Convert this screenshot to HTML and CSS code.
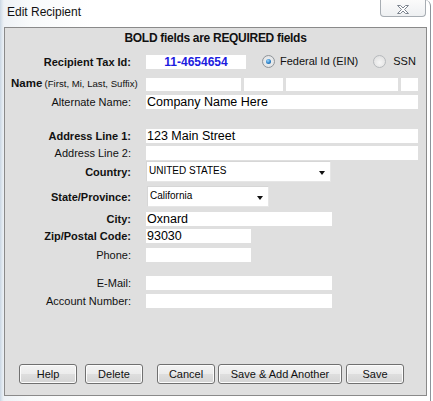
FILE: index.html
```html
<!DOCTYPE html>
<html>
<head>
<meta charset="utf-8">
<title>Edit Recipient</title>
<link rel="stylesheet" href="styles.css">
</head>
<body>
<div class="window">
  <div class="titlebar">
    <span class="title">Edit Recipient</span>
    <div class="close">
      <svg width="12" height="9" viewBox="0 0 12 9">
        <path d="M0.5 0.5 H3.5 L6 3 L8.5 0.5 H11.5 L7.5 4.5 L11.5 8.5 H8.5 L6 6 L3.5 8.5 H0.5 L4.5 4.5 Z" fill="#fff" stroke="#7d8590" stroke-width="1" stroke-linejoin="round"/>
      </svg>
    </div>
  </div>
  <div class="panel">
    <div class="header">BOLD fields are REQUIRED fields</div>

    <div class="row r-tax">
      <span class="lbl b">Recipient Tax Id:</span>
      <div class="field w100 taxid">11-4654654</div>
      <span class="radio on"></span><span class="rtext">Federal Id (EIN)</span>
      <span class="radio off"></span><span class="rtext">SSN</span>
    </div>

    <div class="row r-name">
      <span class="lbl-name"><b>Name</b> <small>(First, Mi, Last, Suffix)</small></span>
      <div class="names">
        <div class="field n1"></div>
        <div class="field n2"></div>
        <div class="field n3"></div>
        <div class="field n4"></div>
      </div>
    </div>

    <div class="row r-alt">
      <span class="lbl">Alternate Name:</span>
      <div class="field wfull">Company Name Here</div>
    </div>

    <div class="row r-addr1">
      <span class="lbl b">Address Line 1:</span>
      <div class="field wfull">123 Main Street</div>
    </div>

    <div class="row r-addr2">
      <span class="lbl">Address Line 2:</span>
      <div class="field wfull"></div>
    </div>

    <div class="row r-country">
      <span class="lbl b">Country:</span>
      <div class="select wcountry"><span>UNITED STATES</span><i class="arrow"></i></div>
    </div>

    <div class="row r-state">
      <span class="lbl b">State/Province:</span>
      <div class="select wstate"><span>California</span><i class="arrow"></i></div>
    </div>

    <div class="row r-city">
      <span class="lbl b">City:</span>
      <div class="field wmid">Oxnard</div>
    </div>

    <div class="row r-zip">
      <span class="lbl b">Zip/Postal Code:</span>
      <div class="field wshort">93030</div>
    </div>

    <div class="row r-phone">
      <span class="lbl">Phone:</span>
      <div class="field wshort"></div>
    </div>

    <div class="row r-email">
      <span class="lbl">E-Mail:</span>
      <div class="field wmid"></div>
    </div>

    <div class="row r-acct">
      <span class="lbl">Account Number:</span>
      <div class="field wmid"></div>
    </div>

    <div class="buttons">
      <button class="btn">Help</button>
      <button class="btn b-delete">Delete</button>
      <button class="btn b-cancel">Cancel</button>
      <button class="btn b-wide">Save &amp; Add Another</button>
      <button class="btn b-save">Save</button>
    </div>
  </div>
</div>
</body>
</html>
```

FILE: styles.css
```css
html, body {
  margin: 0;
  padding: 0;
}
body {
  width: 433px;
  height: 401px;
  overflow: hidden;
  background: #ffffff;
  font-family: "Liberation Sans", Arial, sans-serif;
  color: #000;
}
.window {
  width: 431px;
  height: 401px;
  box-sizing: border-box;
  border-right: 1px solid #8d949b;
  border-top-right-radius: 6px;
  background:
    linear-gradient(to right, #c9d6e3 0, #dfe7ef 2px, #eef2f6 4px, #f8fafb 30px, #ffffff 90px);
}
.titlebar {
  height: 27px;
  display: flex;
  align-items: flex-start;
}
.title {
  margin: 5px 0 0 7px;
  font-size: 12px;
  line-height: 15px;
  color: #111;
}
.close {
  margin-left: auto;
  margin-right: 4px;
  width: 46px;
  height: 17px;
  box-sizing: border-box;
  border: 1px solid #a7adb3;
  border-top: none;
  border-radius: 0 0 4px 4px;
  background: linear-gradient(#fbfbfb, #eef0f2);
  display: flex;
  justify-content: center;
  padding-top: 5px;
}
.close svg {
  display: block;
}
.panel {
  margin-left: 4px;
  width: 423px;
  height: 369px;
  box-sizing: border-box;
  border: 1px solid #8a8a8a;
  background: #dfdfdf;
}
.header {
  margin-top: 3px;
  text-align: center;
  font-weight: bold;
  font-size: 12px;
  letter-spacing: -0.3px;
  line-height: 14px;
  color: #111;
}
.row {
  display: flex;
  align-items: center;
}
.lbl {
  flex: none;
  width: 126px;
  margin-right: 15px;
  text-align: right;
  font-size: 11px;
  line-height: 14px;
  white-space: nowrap;
  color: #111;
}
.lbl.b {
  font-weight: bold;
}
.field {
  flex: none;
  height: 14px;
  box-sizing: border-box;
  background: #fff;
  font-size: 12.5px;
  line-height: 15px;
  padding-left: 1px;
  white-space: nowrap;
  overflow: hidden;
}
.w100 { width: 100px; }
.wfull { width: 272px; }
.wmid { width: 186px; }
.wshort { width: 105px; }

.r-tax { margin-top: 10px; }
.taxid {
  text-align: center;
  color: #1c1ce0;
  font-weight: bold;
  font-size: 12px;
  line-height: 14px;
  padding-left: 0;
}
.radio {
  flex: none;
  width: 13px;
  height: 13px;
  box-sizing: border-box;
  border-radius: 50%;
  position: relative;
  top: -1px;
}
.radio.on {
  margin-left: 16px;
  border: 1px solid #8f9499;
  background: radial-gradient(circle at 50% 50%, #f2f2f2 0, #e2e4e6 70%, #d9dcdf 100%);
}
.radio.on::after {
  content: "";
  position: absolute;
  left: 3px;
  top: 3px;
  width: 5px;
  height: 5px;
  border-radius: 50%;
  background: radial-gradient(circle at 40% 35%, #9fd8ff 0, #2c82c9 55%, #174f86 100%);
}
.radio.off {
  margin-left: 15px;
  border: 1px solid #b7babd;
  background: radial-gradient(circle at 50% 60%, #f6f6f6 0, #e3e3e3 70%, #cfd1d3 100%);
}
.rtext {
  flex: none;
  margin-left: 5px;
  font-size: 11px;
  line-height: 14px;
  position: relative;
  top: -1px;
  color: #111;
}
.radio.off + .rtext {
  margin-left: 7px;
}

.r-name { margin-top: 8px; }
.lbl-name {
  flex: none;
  width: 141px;
  box-sizing: border-box;
  padding-left: 6px;
  white-space: nowrap;
  font-size: 8px;
  line-height: 13px;
  color: #111;
}
.lbl-name b {
  font-size: 11.5px;
}
.lbl-name small {
  font-size: 9.6px;
}
.names {
  display: flex;
  gap: 3px;
}
.names .field {
  height: 13px;
}
.n1 { width: 95px; }
.n2 { width: 39px; }
.n3 { width: 112px; }
.n4 { width: 17px; }

.r-alt { margin-top: 4px; }
.r-addr1 { margin-top: 20px; }
.r-addr2 { margin-top: 3px; }
.r-country { margin-top: 1px; }
.r-state { margin-top: 4px; }
.r-city { margin-top: 5px; }
.r-zip { margin-top: 3px; }
.r-phone { margin-top: 5px; }
.r-email { margin-top: 14px; }
.r-acct { margin-top: 4px; }

.select {
  flex: none;
  height: 21px;
  box-sizing: border-box;
  margin-left: 1px;
  background: #fff;
  border: 1px solid #d6d6d6;
  border-bottom-color: #e6e6e6;
  border-right-color: #e6e6e6;
  display: flex;
  align-items: center;
  font-size: 10px;
  padding: 0 0 1px 2px;
  position: relative;
}
.select span {
  flex: 1;
  line-height: 12px;
}
.wcountry { width: 185px; margin-left: 0; }
.wstate { width: 122px; }
.arrow {
  flex: none;
  width: 0;
  height: 0;
  border-left: 3.5px solid transparent;
  border-right: 3.5px solid transparent;
  border-top: 4px solid #111;
  margin-right: 5px;
  margin-top: 3px;
}

.buttons {
  margin-top: 56px;
  margin-left: 14px;
  display: flex;
}
.btn {
  flex: none;
  height: 20px;
  width: 58px;
  box-sizing: border-box;
  margin: 0;
  padding: 0;
  border: 1px solid #707070;
  border-radius: 3px;
  background: linear-gradient(#f3f3f3 0, #ececec 48%, #dedede 52%, #d4d4d4 100%);
  box-shadow: inset 0 0 0 1px #fcfcfc;
  font-family: "Liberation Sans", Arial, sans-serif;
  font-size: 11px;
  line-height: 17px;
  color: #111;
}
.b-delete { margin-left: 8px; }
.b-cancel { margin-left: 14px; }
.b-wide { margin-left: 3px; width: 124px; }
.b-save { margin-left: 4px; }
```
